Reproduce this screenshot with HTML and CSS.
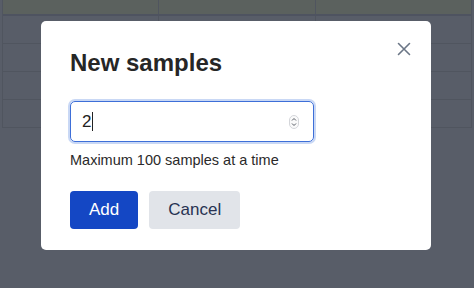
FILE: index.html
```html
<html>
  <head>
    <title>New samples</title>
    <link rel="stylesheet" href="styles.css">
  </head>
  <body>

    <div class='sheet'>
      <div class='row head'>
        <div class='cell'></div>
        <div class='cell'></div>
        <div class='cell'></div>
      </div>
      <div class='row'><div class='cell'></div><div class='cell'></div><div class='cell'></div></div>
      <div class='row'><div class='cell'></div><div class='cell'></div><div class='cell'></div></div>
      <div class='row'><div class='cell'></div><div class='cell'></div><div class='cell'></div></div>
      <div class='row'><div class='cell'></div><div class='cell'></div><div class='cell'></div></div>
    </div>

    <div class='backdrop'>
      <div class='modal'>
        <button class='close' aria-label='Close'>
          <svg width='14' height='14' viewBox='0 0 14 14'>
            <path d='M1.5 1.5 L12.5 12.5 M12.5 1.5 L1.5 12.5' stroke='#6b7686' stroke-width='1.6' stroke-linecap='round' fill='none'/>
          </svg>
        </button>
        <h2 class='title'>New samples</h2>
        <div class='field'>
          <span class='value'>2</span><span class='caret'></span>
          <span class='spin'>
            <svg width='10' height='14' viewBox='0 0 10 14'>
              <rect x='0.5' y='0.5' width='9' height='13' rx='4.5' fill='#fafafa' stroke='#d4d6da'/>
              <path d='M3 5.5 L5 3.5 L7 5.5 M3 8.5 L5 10.5 L7 8.5' stroke='#555a63' stroke-width='1' fill='none'/>
            </svg>
          </span>
        </div>
        <p class='hint'>Maximum 100 samples at a time</p>
        <div class='actions'>
          <button class='btn primary'>Add</button>
          <button class='btn secondary'>Cancel</button>
        </div>
      </div>
    </div>

  </body>
</html>
```

FILE: styles.css
```css
    body{
      margin: 0;
      background: #585d68;
      font-family: "Liberation Sans", Arial, sans-serif;
      overflow: hidden;
    }

    .sheet{
      margin-left: 2px;
      width: 468px;
      border-left: 1px solid #50555f;
      border-right: 1px solid #50555f;
    }

    .row{
      display: flex;
      height: 27px;
      border-bottom: 1px solid #50555f;
    }

    .row.head{
      height: 14px;
      background: #5b615e;
      border-bottom: 2px solid #4e5360;
    }

    .cell{
      flex: 1;
      border-right: 1px solid #50555f;
    }

    .cell:last-child{
      border-right: none;
    }

    .backdrop{
      position: fixed;
      top: 0;
      left: 0;
      right: 0;
      bottom: 0;
      display: flex;
      justify-content: center;
      align-items: flex-start;
    }

    .modal{
      position: relative;
      margin-top: 21px;
      margin-right: 2px;
      width: 390px;
      height: 229px;
      box-sizing: border-box;
      padding: 28px 29px 0 29px;
      background: #fff;
      border-radius: 5px;
    }

    .close{
      position: absolute;
      top: 21px;
      right: 20px;
      display: flex;
      padding: 0;
      border: none;
      background: none;
    }

    .title{
      margin: 0;
      font-size: 24px;
      font-weight: bold;
      color: #262626;
      line-height: 28px;
    }

    .field{
      margin-top: 24px;
      width: 244px;
      height: 41px;
      box-sizing: border-box;
      border: 1.5px solid #3e6fd8;
      border-radius: 5px;
      box-shadow: 0 0 0 2px #c9d8f5;
      display: flex;
      align-items: center;
      padding: 0 14px 0 11px;
    }

    .value{
      font-size: 17px;
      color: #222;
    }

    .caret{
      width: 1px;
      height: 19px;
      background: #222;
      margin-left: 1px;
    }

    .spin{
      margin-left: auto;
      line-height: 0;
    }

    .hint{
      margin: 9px 0 0 0;
      font-size: 14.5px;
      color: #2a2a2a;
      line-height: 18px;
    }

    .actions{
      display: flex;
      gap: 11px;
      margin-top: 22px;
    }

    .btn{
      height: 38px;
      padding: 0 19px;
      border: none;
      border-radius: 4px;
      font-family: "Liberation Sans", Arial, sans-serif;
      font-size: 17px;
    }

    .primary{
      background: #1447c4;
      color: #fff;
    }

    .secondary{
      background: #e1e4e9;
      color: #283352;
    }
```
